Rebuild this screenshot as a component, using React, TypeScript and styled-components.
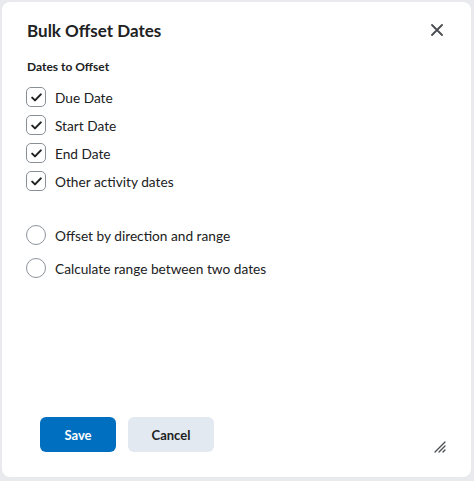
import React from 'react'
import styled, { createGlobalStyle } from 'styled-components'

const dates = ['Due Date', 'Start Date', 'End Date', 'Other activity dates']
const modes = ['Offset by direction and range', 'Calculate range between two dates']

const Global = createGlobalStyle`
html, body {
  margin: 0;
  padding: 0;
  background: #e8eaee;
  font-family: Lato, "Noto Sans", sans-serif;
  color: #202122;
}
`

const Page = styled.div`
width: 474px;
height: 481px;
box-sizing: border-box;
padding: 2px 3px 4px 2px;
`

const Dialog = styled.div`
height: 100%;
box-sizing: border-box;
background: #fff;
border-radius: 8px;
display: flex;
flex-direction: column;
padding: 0 0 0 24px;
position: relative;
`

const Header = styled.div`
display: flex;
justify-content: space-between;
align-items: center;
height: 56px;
padding: 0 24px 0 1px;
`

const Title = styled.h2`
margin: 0;
font-size: 17px;
font-weight: 700;
`

const Close = styled.button`
border: none;
background: none;
padding: 0;
display: flex;
width: 20px;
height: 20px;
align-items: center;
justify-content: center;
`

const Legend = styled.div`
font-size: 12px;
font-weight: 700;
padding-left: 1px;
margin-top: 1px;
margin-bottom: 13px;
`

const List = styled.div`
display: flex;
flex-direction: column;
gap: 8px;
`

const Option = styled.label`
display: flex;
align-items: center;
gap: 9px;
font-size: 13.7px;
height: 20px;
`

const Box = styled.span`
flex: none;
width: 20px;
height: 20px;
box-sizing: border-box;
border: 1.8px solid #898f97;
border-radius: 5px;
display: flex;
align-items: center;
justify-content: center;
`

const Radio = styled.span`
flex: none;
width: 20px;
height: 20px;
box-sizing: border-box;
border: 1.5px solid #8d939b;
border-radius: 50%;
`

const Radios = styled.div`
display: flex;
flex-direction: column;
gap: 13px;
margin-top: 34px;
`

const Footer = styled.div`
margin-top: auto;
display: flex;
gap: 12px;
padding: 0 0 25px 14px;
`

const Button = styled.button<{ primary?: boolean }>`
height: 35px;
min-width: ${(p) => (p.primary ? '76px' : '86px')};
border: none;
border-radius: 6px;
font-family: Lato, "Noto Sans", sans-serif;
font-size: 13px;
font-weight: 700;
background: ${(p) => (p.primary ? '#006fbf' : '#e3e9f1')};
color: ${(p) => (p.primary ? '#fff' : '#202122')};
`

const Grip = styled.svg`
position: absolute;
right: 25px;
bottom: 24px;
`

const App = () => {
  return (
    <Page>
      <Global />
      <Dialog>
        <Header>
          <Title>Bulk Offset Dates</Title>
          <Close aria-label="Close">
            <svg width="12" height="12" viewBox="0 0 12 12">
              <path d="M1 1 L11 11 M11 1 L1 11" stroke="#494c50" strokeWidth="1.8" strokeLinecap="round" />
            </svg>
          </Close>
        </Header>
        <Legend>Dates to Offset</Legend>
        <List>
          {dates.map((d) => (
            <Option key={d}>
              <Box>
                <svg width="11" height="9" viewBox="0 0 11 9">
                  <path d="M1.2 4.6 L4 7.4 L9.8 1.4" fill="none" stroke="#202122" strokeWidth="2" strokeLinecap="round" strokeLinejoin="round" />
                </svg>
              </Box>
              {d}
            </Option>
          ))}
        </List>
        <Radios>
          {modes.map((m) => (
            <Option key={m}>
              <Radio />
              {m}
            </Option>
          ))}
        </Radios>
        <Footer>
          <Button primary>Save</Button>
          <Button>Cancel</Button>
        </Footer>
        <Grip width="12" height="12" viewBox="0 0 12 12">
          <path d="M1 11 L11 1 M5 11 L11 5 M9 11 L11 9" stroke="#494c50" strokeWidth="1.3" strokeLinecap="round" />
        </Grip>
      </Dialog>
    </Page>
  )
}

export default App
